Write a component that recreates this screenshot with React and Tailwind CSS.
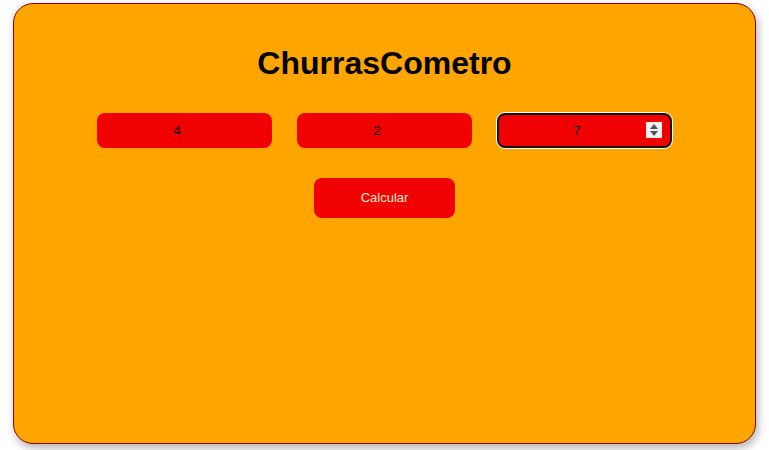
import React, { useState } from "react";

const Campo = ({ valor, setValor, focado }) => (
    <div className="relative">
        <input
            type="text"
            value={valor}
            onChange={(e) => setValor(e.target.value)}
            className={`w-[175px] h-[35px] rounded-lg bg-[#f00000] text-center text-[13px] text-black outline-none pr-[15px] ${focado ? "border-2 border-[#111] ring-1 ring-white" : "border-0"}`}
        />
        {focado && (
            // setinhas do input numerico
            <div className="absolute right-[10px] top-[9px] w-[16px] h-[16px] bg-[#f0f0f0] flex flex-col items-center justify-center gap-[2px]">
                <svg width="8" height="5" viewBox="0 0 8 5"><path d="M0 5L4 0L8 5Z" fill="#505050" /></svg>
                <svg width="8" height="5" viewBox="0 0 8 5"><path d="M0 0L4 5L8 0Z" fill="#505050" /></svg>
            </div>
        )}
    </div>
);

const App = () => {
    const [homens, setHomens] = useState("4");
    const [mulheres, setMulheres] = useState("2");
    const [criancas, setCriancas] = useState("7");

    return (
        <div className="bg-white w-[769px] h-[450px] pt-[3px] font-['Liberation_Sans',Arial,sans-serif]">
            <div className="mx-[13px] h-[441px] bg-[#ffa500] border border-[#8b0000] rounded-[20px] shadow-[2px_4px_8px_rgba(0,0,0,0.3)] flex flex-col items-center">
                <h1 className="mt-[38px] text-[32px] leading-[42px] font-bold text-black">ChurrasCometro</h1>
                <div className="mt-[29px] flex gap-[25px]">
                    <Campo valor={homens} setValor={setHomens} />
                    <Campo valor={mulheres} setValor={setMulheres} />
                    <Campo valor={criancas} setValor={setCriancas} focado />
                </div>
                <button className="mt-[30px] w-[141px] h-[40px] rounded-lg bg-[#f00000] text-[13px] text-[#ffeccc]">
                    Calcular
                </button>
            </div>
        </div>
    );
};

export default App;
